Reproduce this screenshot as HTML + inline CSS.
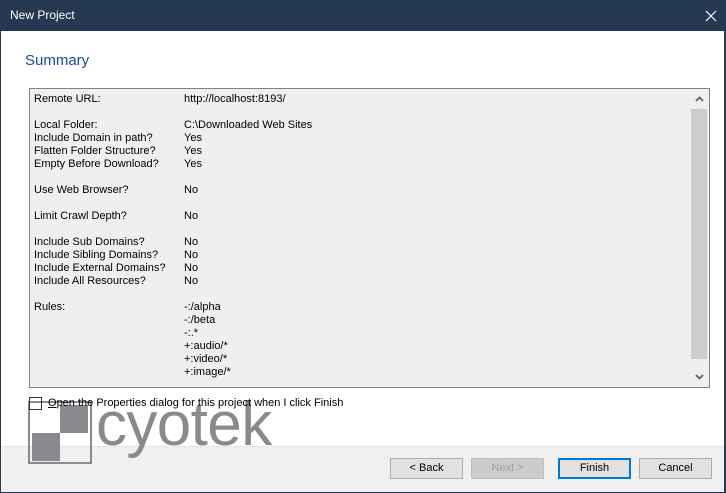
<!DOCTYPE html>
<html><head><style>
*{margin:0;padding:0;box-sizing:border-box}
body{width:726px;height:493px;overflow:hidden;background:#253a52;font-family:"Liberation Sans",sans-serif;font-size:11px;color:#000;position:relative}
.win{position:absolute;left:1px;top:31px;width:723px;height:461px;background:#fff}
.title{position:absolute;left:10px;top:8px;color:#fff;font-size:12px}
.sum{position:absolute;left:25px;top:52px;font-size:15px;color:#1a4ba5}
.lb{position:absolute;left:29px;top:88px;width:681px;height:300px;background:#efefef;border:1px solid #828282}
.row{position:absolute;left:4px;height:13px;line-height:13px;white-space:nowrap}
.v{position:absolute;left:150px}
.sb{position:absolute;left:660px;top:0;width:19px;height:298px;background:#efefef}
.th{position:absolute;left:1px;top:20px;width:16px;height:250px;background:#cdcdcd}
.bot{position:absolute;left:1px;top:446px;width:723px;height:46px;background:#f0f0f0;border-top:1px solid #e3e3e3}
.btn{position:absolute;top:458px;width:73px;height:21px;background:#e1e1e1;border:1px solid #adadad;text-align:center;line-height:19px;font-size:11px}
.sq{position:absolute;background:#8a8a8e}
</style></head><body>
<div class="title">New Project</div>
<svg style="position:absolute;left:705px;top:10px" width="12" height="12"><path d="M1 1L11 11M11 1L1 11" stroke="#fff" stroke-width="1.2"/></svg>
<div class="win"></div>
<div class="sum">Summary</div>
<div class="lb">
<div class="row" style="top:4px">Remote URL:<span class="v">http://localhost:8193/</span></div>
<div class="row" style="top:30px">Local Folder:<span class="v">C:\Downloaded Web Sites</span></div>
<div class="row" style="top:43px">Include Domain in path?<span class="v">Yes</span></div>
<div class="row" style="top:56px">Flatten Folder Structure?<span class="v">Yes</span></div>
<div class="row" style="top:69px">Empty Before Download?<span class="v">Yes</span></div>
<div class="row" style="top:95px">Use Web Browser?<span class="v">No</span></div>
<div class="row" style="top:121px">Limit Crawl Depth?<span class="v">No</span></div>
<div class="row" style="top:147px">Include Sub Domains?<span class="v">No</span></div>
<div class="row" style="top:160px">Include Sibling Domains?<span class="v">No</span></div>
<div class="row" style="top:173px">Include External Domains?<span class="v">No</span></div>
<div class="row" style="top:186px">Include All Resources?<span class="v">No</span></div>
<div class="row" style="top:212px">Rules:<span class="v">-:/alpha</span></div>
<div class="row" style="top:225px"><span class="v">-:/beta</span></div>
<div class="row" style="top:238px"><span class="v">-:.*</span></div>
<div class="row" style="top:251px"><span class="v">+:audio/*</span></div>
<div class="row" style="top:264px"><span class="v">+:video/*</span></div>
<div class="row" style="top:277px"><span class="v">+:image/*</span></div>
<div class="sb"><div class="th"></div>
<svg style="position:absolute;left:5px;top:7px" width="9" height="6"><path d="M1 5L4.5 1.5L8 5" stroke="#606060" stroke-width="1.8" fill="none"/></svg>
<svg style="position:absolute;left:5px;top:285px" width="9" height="6"><path d="M1 1L4.5 4.5L8 1" stroke="#606060" stroke-width="1.8" fill="none"/></svg>
</div>
</div>
<div class="bot"></div>
<div style="position:absolute;left:28px;top:401px;width:64px;height:63px;border:2px solid #8a8a8e"></div>
<div class="sq" style="left:60px;top:405px;width:28px;height:28px"></div>
<div class="sq" style="left:32px;top:433px;width:28px;height:28px"></div>
<div style="position:absolute;left:96px;top:390px;font-size:62px;line-height:70px;color:#8a8a8e;letter-spacing:-0.6px">cyotek</div>
<div style="position:absolute;left:29px;top:397px;width:13px;height:13px;border:1px solid #333;background:transparent"></div>
<div style="position:absolute;left:48px;top:397px;line-height:13px"><u>O</u>pen the Properties dialog for this project when I click Finish</div>
<div class="btn" style="left:390px">&lt; Back</div>
<div class="btn" style="left:471px;color:#a0a0a0;background:#cccccc;border-color:#bfbfbf">Next &gt;</div>
<div class="btn" style="left:558px;border:2px solid #0078d7;line-height:17px">Finish</div>
<div class="btn" style="left:639px">Cancel</div>
</body></html>
